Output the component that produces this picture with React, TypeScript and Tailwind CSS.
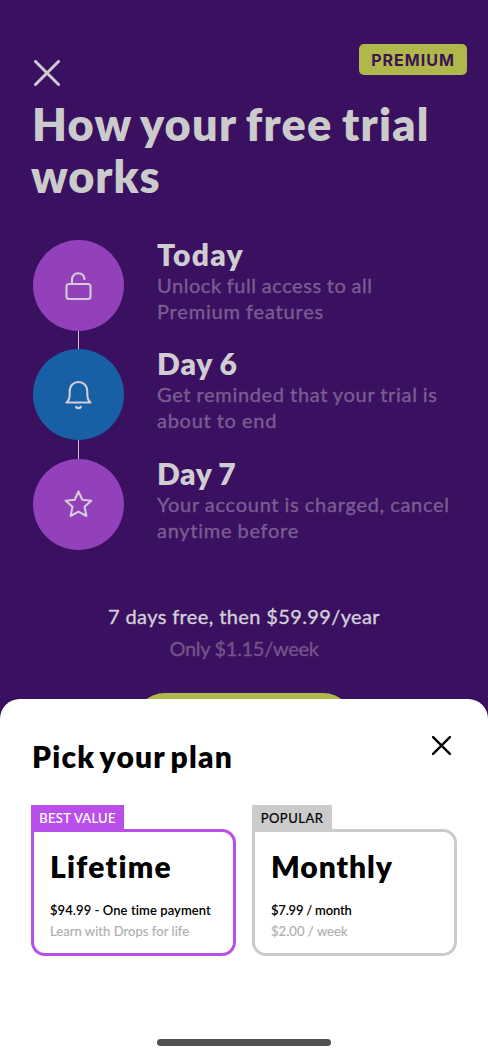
import type { ReactNode } from "react";

function Cross({ className, strokeWidth }: { className: string; strokeWidth: number }) {
  return (
    <svg className={className} viewBox="0 0 26 26" fill="none" stroke="currentColor" strokeWidth={strokeWidth} strokeLinecap="round">
      <path d="M1.5 1.5 24.5 24.5M24.5 1.5 1.5 24.5" />
    </svg>
  );
}

function Glyph({ children }: { children: ReactNode }) {
  return (
    <svg className="h-[30px] w-[30px]" viewBox="0 0 30 30" fill="none" stroke="#d3cdd8" strokeWidth="2.1" strokeLinecap="round" strokeLinejoin="round">
      {children}
    </svg>
  );
}

const steps = [
  {
    title: "Today",
    titleClass: "tracking-[1.3px]",
    lines: [
      { text: "Unlock full access to all", className: "tracking-[0.55px] [word-spacing:-0.500px]" },
      { text: "Premium features", className: "tracking-[0.8px] [word-spacing:-0.500px]" },
    ],
    color: "bg-[#9340bb]",
    icon: (
      <Glyph>
        <rect x="2.500" y="13" width="24" height="15" rx="2.5" />
        <path d="M8 13V8.600C8 4.700 10.800 2.300 14.300 2.300c3.400 0 5.700 2.200 6.200 5.700" />
      </Glyph>
    ),
  },
  {
    title: "Day 6",
    titleClass: "tracking-[0.9px] [word-spacing:-1px]",
    lines: [
      { text: "Get reminded that your trial is", className: "tracking-[0.68px] [word-spacing:-0.500px]" },
      { text: "about to end", className: "tracking-[0.72px] [word-spacing:-0.500px]" },
    ],
    color: "bg-[#1860a6]",
    icon: (
      <Glyph>
        <path d="M2.500 22.500h24c-2.500-2.200-3.200-4.500-3.200-8v-3C23.300 5.600 19.500 2 14.500 2S5.700 5.600 5.700 11.500v3c0 3.500-.7 5.800-3.200 8z" />
        <path d="M12.200 27c1.100 1.500 3.500 1.500 4.600 0" strokeWidth="2.4" />
      </Glyph>
    ),
  },
  {
    title: "Day 7",
    titleClass: "tracking-[0.6px] [word-spacing:-1px]",
    lines: [
      { text: "Your account is charged, cancel", className: "tracking-[0.72px] [word-spacing:-0.500px]" },
      { text: "anytime before", className: "tracking-[0.72px] [word-spacing:-0.500px]" },
    ],
    color: "bg-[#9340bb]",
    icon: (
      <Glyph>
        <path d="M14.500 2.500 18.300 10.800 27.300 11.700 20.500 17.700 22.400 27 14.500 22.600 6.600 27 8.500 17.700 1.700 11.700 10.700 10.800z" />
      </Glyph>
    ),
  },
];

function Plan(props: {
  tag: string;
  name: string;
  price: string;
  note: string;
  tagClass: string;
  borderClass: string;
  nameClass: string;
  priceClass: string;
}) {
  return (
    <div className="flex w-[205px] flex-col items-start">
      <div className={`flex h-6 justify-center pt-[2px] text-[13px] leading-[22px] [-webkit-text-stroke:0.2px] ${props.tagClass}`}>{props.tag}</div>
      <div className={`h-[127px] w-full rounded-[14px] rounded-tl-none border-[3px] pl-4 ${props.borderClass}`}>
        <div className={`pt-[16px] text-[30px] leading-[36px] font-extrabold ${props.nameClass}`}>{props.name}</div>
        <div className={`mt-[16px] text-[13px] leading-[21px] font-semibold ${props.priceClass}`}>{props.price}</div>
        <div className="text-[13px] leading-[21px] tracking-[0.05px] text-[#b0b0b0] [-webkit-text-stroke:0.2px]">{props.note}</div>
      </div>
    </div>
  );
}

export default function App() {
  return (
    <div className="flex h-[1056px] w-[488px] flex-col overflow-hidden bg-[#3a1160] font-['Lato',sans-serif] whitespace-nowrap">
      <header className="flex h-[98px] shrink-0 items-start justify-between pr-[21px] pl-[34px]">
        <Cross className="mt-[60px] h-[26px] w-[26px] text-[#cecad2]" strokeWidth={3} />
        <div className="mt-[44px] flex h-[31px] w-[108px] items-center justify-center rounded-[5px] bg-[#b0b84b] pt-px font-['Inter',sans-serif] text-[16px] font-bold tracking-[1px] text-[#3a1550]">
          PREMIUM
        </div>
      </header>
      <h1 className="h-[142px] shrink-0 pl-8 text-[45px] leading-[52px] font-extrabold tracking-[1.25px] text-[#cbcbcb] [word-spacing:-2.200px]">
        How your free trial
        <br />
        <span className="-ml-px tracking-[0.9px]">works</span>
      </h1>
      <main className="flex shrink-0 flex-col pl-[33px]">
        {steps.map((step, i) => (
          <section key={step.title} className="flex h-[109.400px] gap-[33px]">
            <div className="flex w-[91px] flex-col items-center">
              <div className={`flex h-[91px] w-[91px] shrink-0 items-center justify-center rounded-full ${step.color}`}>{step.icon}</div>
              {i < 2 && <div className="w-[1.500px] flex-1 bg-[#c9bfd2]" />}
            </div>
            <div>
              <h2 className={`-mt-px mb-[3px] text-[30px] leading-[30px] font-extrabold text-[#d0cdd2] ${step.titleClass}`}>{step.title}</h2>
              <p className="text-[20px] leading-[26px] text-[#7c5c92] [-webkit-text-stroke:0.350px]">
                {step.lines.map((line) => (
                  <span key={line.text} className={`block ${line.className}`}>
                    {line.text}
                  </span>
                ))}
              </p>
            </div>
          </section>
        ))}
      </main>
      <div className="flex h-[125px] shrink-0 flex-col items-center pt-[32px] text-[20px] leading-[33px] [-webkit-text-stroke:0.350px]">
        <p className="tracking-[0.38px] text-[#d4cfd8]">7 days free, then $59.99/year</p>
        <p className="-mt-px tracking-[-0.300px] text-[#755388]">Only $1.15/week</p>
      </div>
      <div className="h-16 w-[222px] shrink-0 self-center rounded-full bg-[#b0b84b]" />
      <div className="relative -mt-[58px] flex flex-1 flex-col rounded-t-[20px] bg-white text-black">
        <div className="flex h-[106px] items-start justify-between pr-[37px] pl-8">
          <h2 className="mt-[39px] text-[30px] leading-[36px] font-extrabold tracking-[1.2px] [word-spacing:-3px]">Pick your plan</h2>
          <Cross className="mt-[37px] h-[19px] w-[19px]" strokeWidth={3.2} />
        </div>
        <div className="flex gap-4 pl-[31px]">
          <Plan
            tag="BEST VALUE"
            name="Lifetime"
            price="$94.99 - One time payment"
            note="Learn with Drops for life"
            tagClass="w-[93px] bg-[#b94fe8] text-white tracking-[0.300px]"
            borderClass="border-[#b94fe8]"
            nameClass="tracking-[1.3px]"
            priceClass="tracking-[0.08px]"
          />
          <Plan
            tag="POPULAR"
            name="Monthly"
            price="$7.99 / month"
            note="$2.00 / week"
            tagClass="w-[80px] bg-[#cbcbcb] text-black tracking-[0.500px]"
            borderClass="border-[#cbcbcb]"
            nameClass="tracking-[0.95px]"
            priceClass="tracking-[-0.2px]"
          />
        </div>
        <div className="mt-auto mb-[10px] h-[7px] w-[174px] self-center rounded-full bg-[#505250]" />
      </div>
    </div>
  );
}
